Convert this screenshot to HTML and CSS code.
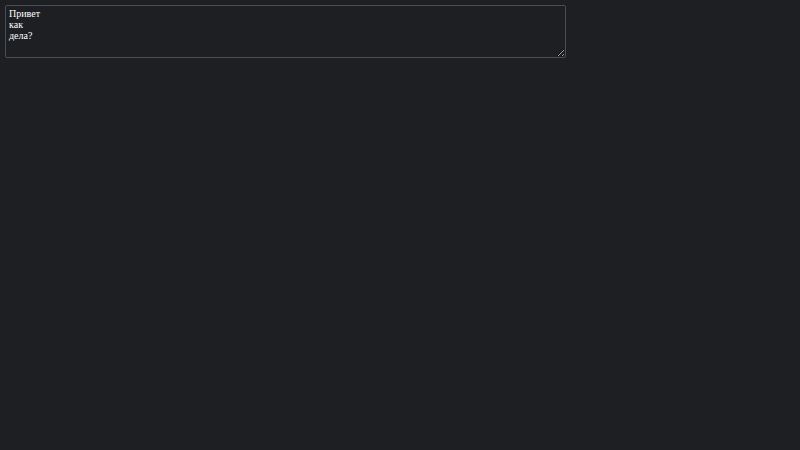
FILE: index.html
```html
<!DOCTYPE html>
<html lang="ru">
<head>
<meta charset="utf-8">
<link rel="stylesheet" href="styles.css">
</head>
<body>
<textarea class="note">Привет
как
дела?</textarea>
</body>
</html>
```
FILE: styles.css
```css
html { color-scheme: dark; background: #1e1f23; }
body { margin: 5px; background: #1e1f23; }
.note {
  display: block;
  box-sizing: border-box;
  width: 561px;
  height: 53px;
  margin: 0;
  padding: 2px 3px;
  font-family: "Liberation Serif", serif;
  font-size: 10px;
  line-height: normal;
  color: #ffffff;
  background: #1e1f23;
  border: 1px solid #4c4d52;
  border-radius: 2px;
}
```
